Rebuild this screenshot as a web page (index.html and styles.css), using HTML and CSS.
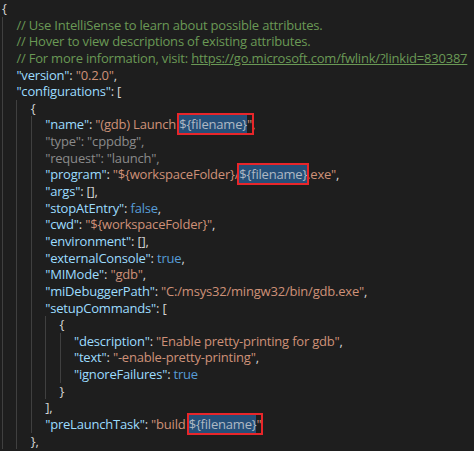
FILE: index.html
```html
<!DOCTYPE html>
<html>
<head>
<meta charset="utf-8">
<link rel="stylesheet" href="styles.css">
</head>
<body>
<div class="editor">
<div class="ln"><span class="p">{</span></div>
<div class="ln"><span class="i"></span><span class="c">// Use IntelliSense to learn about possible attributes.</span></div>
<div class="ln"><span class="i"></span><span class="c">// Hover to view descriptions of existing attributes.</span></div>
<div class="ln"><span class="i"></span><span class="c">// For more information, visit: <span class="u">https://go.microsoft.com/fwlink/?linkid=830387</span></span></div>
<div class="ln"><span class="i"></span><span class="k">"version"</span><span class="p">: </span><span class="s">"0.2.0"</span><span class="p">,</span></div>
<div class="ln"><span class="i"></span><span class="k">"configurations"</span><span class="p">: [</span></div>
<div class="ln"><span class="i"></span><span class="i"></span><span class="p">{</span></div>
<div class="ln"><span class="i"></span><span class="i"></span><span class="i"></span><span class="k">"name"</span><span class="p">: </span><span class="s">"(gdb) Launch <span class="box"><span class="sel">${filename}</span>"</span></span><span class="p">,</span></div>
<div class="ln"><span class="i"></span><span class="i"></span><span class="i"></span><span class="d">"type": "cppdbg",</span></div>
<div class="ln"><span class="i"></span><span class="i"></span><span class="i"></span><span class="d">"request": "launch",</span></div>
<div class="ln"><span class="i"></span><span class="i"></span><span class="i"></span><span class="k">"program"</span><span class="p">: </span><span class="s">"${workspaceFolder}/<span class="box"><span class="sel">${filename}</span></span>.exe"</span><span class="p">,</span></div>
<div class="ln"><span class="i"></span><span class="i"></span><span class="i"></span><span class="k">"args"</span><span class="p">: [],</span></div>
<div class="ln"><span class="i"></span><span class="i"></span><span class="i"></span><span class="k">"stopAtEntry"</span><span class="p">: </span><span class="b">false</span><span class="p">,</span></div>
<div class="ln"><span class="i"></span><span class="i"></span><span class="i"></span><span class="k">"cwd"</span><span class="p">: </span><span class="s">"${workspaceFolder}"</span><span class="p">,</span></div>
<div class="ln"><span class="i"></span><span class="i"></span><span class="i"></span><span class="k">"environment"</span><span class="p">: [],</span></div>
<div class="ln"><span class="i"></span><span class="i"></span><span class="i"></span><span class="k">"externalConsole"</span><span class="p">: </span><span class="b">true</span><span class="p">,</span></div>
<div class="ln"><span class="i"></span><span class="i"></span><span class="i"></span><span class="k">"MIMode"</span><span class="p">: </span><span class="s">"gdb"</span><span class="p">,</span></div>
<div class="ln"><span class="i"></span><span class="i"></span><span class="i"></span><span class="k">"miDebuggerPath"</span><span class="p">: </span><span class="s">"C:/msys32/mingw32/bin/gdb.exe"</span><span class="p">,</span></div>
<div class="ln"><span class="i"></span><span class="i"></span><span class="i"></span><span class="k">"setupCommands"</span><span class="p">: [</span></div>
<div class="ln"><span class="i"></span><span class="i"></span><span class="i"></span><span class="i"></span><span class="p">{</span></div>
<div class="ln"><span class="i"></span><span class="i"></span><span class="i"></span><span class="i"></span><span class="i"></span><span class="k">"description"</span><span class="p">: </span><span class="s">"Enable pretty-printing for gdb"</span><span class="p">,</span></div>
<div class="ln"><span class="i"></span><span class="i"></span><span class="i"></span><span class="i"></span><span class="i"></span><span class="k">"text"</span><span class="p">: </span><span class="s">"-enable-pretty-printing"</span><span class="p">,</span></div>
<div class="ln"><span class="i"></span><span class="i"></span><span class="i"></span><span class="i"></span><span class="i"></span><span class="k">"ignoreFailures"</span><span class="p">: </span><span class="b">true</span></div>
<div class="ln"><span class="i"></span><span class="i"></span><span class="i"></span><span class="i"></span><span class="p">}</span></div>
<div class="ln"><span class="i"></span><span class="i"></span><span class="i"></span><span class="p">],</span></div>
<div class="ln"><span class="i"></span><span class="i"></span><span class="i"></span><span class="k">"preLaunchTask"</span><span class="p">: </span><span class="s">"build <span class="box"><span class="sel">${filename}</span>"</span></span></div>
<div class="ln"><span class="i"></span><span class="i"></span><span class="p">},</span></div>
</div>
</body>
</html>
```
FILE: styles.css
```css
html, body {
  margin: 0;
  padding: 0;
  background: #1e1e1e;
}
.editor {
  width: 474px;
  height: 451px;
  overflow: hidden;
  padding: 0 0 0 2px;
  box-sizing: border-box;
  font-family: "Open Sans", sans-serif;
  font-size: 13px;
  letter-spacing: -0.2px;
  color: #d4d4d4;
}
.ln {
  height: 16.65px;
  line-height: 16.65px;
  white-space: pre;
}
.i {
  display: inline-block;
  width: 14.4px;
  height: 16.65px;
  vertical-align: top;
  box-shadow: inset 1px 0 0 #404040;
}
.c { color: #6a9955; }
.u { text-decoration: underline; }
.k { color: #9cdcfe; }
.s { color: #ce9178; }
.b { color: #569cd6; }
.p { color: #d4d4d4; }
.d { color: #8a8a8a; }
.sel {
  background: #264f78;
  color: #aeb9c4;
}
.box {
  outline: 2px solid #e8262a;
  outline-offset: 0;
}
```
